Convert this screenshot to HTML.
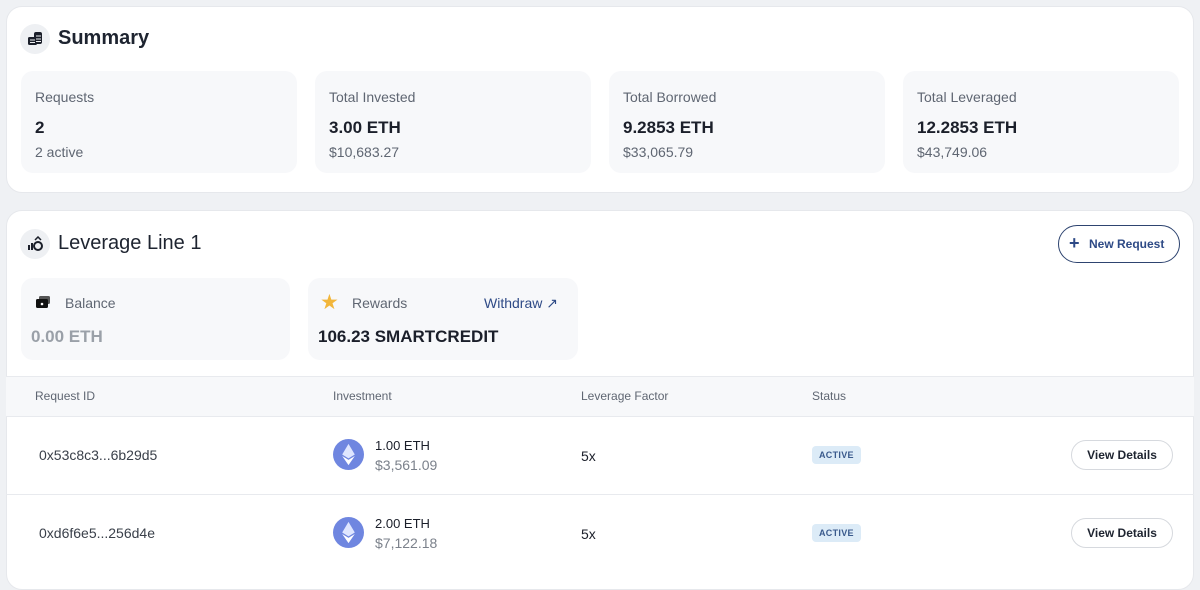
<!DOCTYPE html>
<html><head><style>
*{box-sizing:border-box;margin:0;padding:0}
body{width:1200px;height:575px;background:#eff1f4;font-family:"Liberation Sans",sans-serif;color:#1b1f2a;position:relative;overflow:hidden}
.card{position:absolute;background:#fff;border-radius:16px;border:1px solid #e6e8ec}
.abs{position:absolute}
.ico{position:absolute;width:30px;height:30px;border-radius:50%;background:#eef0f3}
.stat{position:absolute;top:71px;width:276px;height:102px;background:#f7f8fa;border-radius:12px;padding:18px 14px}
.stat .l{font-size:14px;color:#5f6672;height:18px}
.stat .v{font-size:17px;font-weight:bold;color:#1b1f2a;margin-top:11px}
.stat .s{font-size:14px;color:#5f6672;margin-top:6px}
.h{font-size:20px;font-weight:bold;color:#1e2430}
.th{position:absolute;top:389px;font-size:12px;color:#5f6672}
.row{position:absolute;left:6px;width:1188px;height:78px;border-top:1px solid #e8eaee}
.t{position:absolute;font-size:14px}
.badge{position:absolute;left:812px;background:#dcebf7;color:#3a5a8c;font-size:9px;font-weight:bold;padding:4px 7px;border-radius:4px;letter-spacing:.3px}
.btn{position:absolute;left:1071px;width:102px;height:30px;border:1px solid #d6d9de;border-radius:15px;font-size:12px;font-weight:bold;text-align:center;line-height:28px;color:#1e2430}
</style></head><body>
<div class="card" style="left:6px;top:6px;width:1188px;height:187px"></div>
<div class="ico" style="left:20px;top:24px"></div>
<svg class="abs" style="left:28px;top:31px" width="15" height="15" viewBox="0 0 15 15"><rect x="0" y="6" width="9" height="8" rx="1.5" fill="#1b1f2a"/><rect x="6" y="1" width="8" height="12" rx="2" fill="#1b1f2a"/><path d="M2 9h5M2 11.5h5M8 5h5M8 8h5M8 10.5h5" stroke="#eef0f3" stroke-width="1"/></svg>
<div class="abs h" style="left:58px;top:27px">Summary</div>
<div class="stat" style="left:21px"><div class="l">Requests</div><div class="v">2</div><div class="s">2 active</div></div>
<div class="stat" style="left:315px"><div class="l">Total Invested</div><div class="v">3.00 ETH</div><div class="s">$10,683.27</div></div>
<div class="stat" style="left:609px"><div class="l">Total Borrowed</div><div class="v">9.2853 ETH</div><div class="s">$33,065.79</div></div>
<div class="stat" style="left:903px"><div class="l">Total Leveraged</div><div class="v">12.2853 ETH</div><div class="s">$43,749.06</div></div>

<div class="card" style="left:6px;top:210px;width:1188px;height:380px"></div>
<div class="ico" style="left:20px;top:229px"></div>
<svg class="abs" style="left:27px;top:236px" width="16" height="16" viewBox="0 0 16 16"><rect x="1" y="9" width="2" height="5" fill="#1b1f2a"/><rect x="4" y="7" width="2" height="7" fill="#1b1f2a"/><circle cx="11" cy="10" r="4" fill="none" stroke="#1b1f2a" stroke-width="2"/><path d="M8 4l3-3 3 3" stroke="#1b1f2a" stroke-width="1.5" fill="none"/></svg>
<div class="abs h" style="left:58px;top:232px;font-weight:normal;font-size:20px">Leverage Line 1</div>
<div class="abs" style="left:1058px;top:225px;width:122px;height:38px;border:1px solid #2e4470;border-radius:19px;color:#2e4a86;font-size:12px;font-weight:bold;line-height:36px;padding-left:30px">New Request</div>
<div class="abs" style="left:1069px;top:233px;font-size:18px;color:#2e4a86;font-weight:bold">+</div>

<div class="abs" style="left:21px;top:278px;width:269px;height:82px;background:#f7f8fa;border-radius:12px"></div>
<svg class="abs" style="left:35px;top:295px" width="16" height="14" viewBox="0 0 16 14"><rect x="4" y="1" width="11" height="8" rx="1.5" fill="#555"/><rect x="1" y="4" width="12" height="9" rx="1.5" fill="#111"/><circle cx="7" cy="9" r="1.3" fill="#fff"/></svg>
<div class="t" style="left:65px;top:295px;color:#5f6672">Balance</div>
<div class="t" style="left:31px;top:327px;font-size:17px;font-weight:bold;color:#9aa0a8">0.00 ETH</div>

<div class="abs" style="left:308px;top:278px;width:270px;height:82px;background:#f7f8fa;border-radius:12px"></div>
<div class="abs" style="left:320px;top:290px;font-size:21px;color:#f2b63a">★</div>
<div class="t" style="left:352px;top:295px;color:#5f6672">Rewards</div>
<div class="t" style="left:484px;top:295px;color:#2e4a86">Withdraw ↗</div>
<div class="t" style="left:318px;top:327px;font-size:17px;font-weight:bold">106.23 SMARTCREDIT</div>

<div class="abs" style="left:6px;top:376px;width:1188px;height:41px;background:#f7f8fa;border-top:1px solid #e8eaee"></div>
<div class="th" style="left:35px">Request ID</div>
<div class="th" style="left:333px">Investment</div>
<div class="th" style="left:581px">Leverage Factor</div>
<div class="th" style="left:812px">Status</div>

<div class="row" style="top:416px"></div>
<div class="row" style="top:494px"></div>

<div class="t" style="left:39px;top:447px;color:#3a404a">0x53c8c3...6b29d5</div>
<svg class="abs" style="left:333px;top:439px" width="31" height="31" viewBox="0 0 32 32"><circle cx="16" cy="16" r="16" fill="#6f86e0"/><path d="M16 5l-6.5 11L16 20l6.5-4z" fill="#dfe6ff"/><path d="M16 21.5l-6.5-4L16 27l6.5-9.5z" fill="#fff"/></svg>
<div class="t" style="left:375px;top:438px;font-size:13px">1.00 ETH</div>
<div class="t" style="left:375px;top:457px;color:#7b818b">$3,561.09</div>
<div class="t" style="left:581px;top:448px">5x</div>
<div class="badge" style="top:446px">ACTIVE</div>
<div class="btn" style="top:440px">View Details</div>

<div class="t" style="left:39px;top:525px;color:#3a404a">0xd6f6e5...256d4e</div>
<svg class="abs" style="left:333px;top:517px" width="31" height="31" viewBox="0 0 32 32"><circle cx="16" cy="16" r="16" fill="#6f86e0"/><path d="M16 5l-6.5 11L16 20l6.5-4z" fill="#dfe6ff"/><path d="M16 21.5l-6.5-4L16 27l6.5-9.5z" fill="#fff"/></svg>
<div class="t" style="left:375px;top:516px;font-size:13px">2.00 ETH</div>
<div class="t" style="left:375px;top:535px;color:#7b818b">$7,122.18</div>
<div class="t" style="left:581px;top:526px">5x</div>
<div class="badge" style="top:524px">ACTIVE</div>
<div class="btn" style="top:518px">View Details</div>
</body></html>
